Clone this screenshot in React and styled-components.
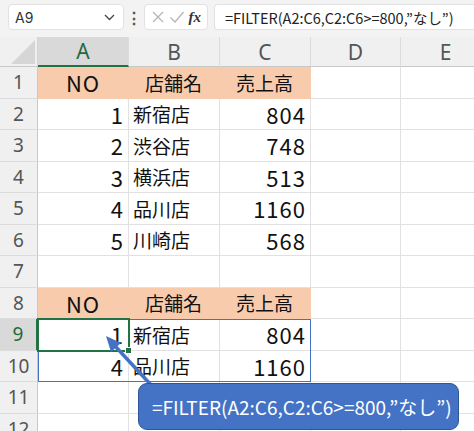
import React from 'react'
import styled, { createGlobalStyle } from 'styled-components'

const GlobalStyle = createGlobalStyle`
  html, body {
    margin: 0;
    padding: 0;
    background: #ffffff;
    overflow: hidden;
  }
  body {
    font-family: "Noto Sans CJK JP", "Noto Sans", sans-serif;
  }
`

const COLS = ['A', 'B', 'C', 'D', 'E']
const COL_WIDTHS = '38px 91px 91px 91px 90px 90px 90px'
const ROW_H = 31.5

const rows = [
	{ n: 1, head: true, cells: ['NO', '店舗名', '売上高'] },
	{ n: 2, cells: ['1', '新宿店', '804'] },
	{ n: 3, cells: ['2', '渋谷店', '748'] },
	{ n: 4, cells: ['3', '横浜店', '513'] },
	{ n: 5, cells: ['4', '品川店', '1160'] },
	{ n: 6, cells: ['5', '川崎店', '568'] },
	{ n: 7, cells: ['', '', ''] },
	{ n: 8, head: true, cells: ['NO', '店舗名', '売上高'] },
	{ n: 9, cells: ['1', '新宿店', '804'] },
	{ n: 10, cells: ['4', '品川店', '1160'] },
	{ n: 11, cells: ['', '', ''] },
	{ n: 12, cells: ['', '', ''] }
]

const Page = styled.div`
	width: 474px;
	height: 431px;
	overflow: hidden;
	background: #fff;
`

const TopBar = styled.div`
	height: 37px;
	background: #f3f3f3;
	display: flex;
	align-items: flex-start;
	padding: 4px 0 0 8px;
	box-sizing: border-box;
`

const NameBox = styled.div`
	width: 116px;
	height: 26px;
	box-sizing: border-box;
	background: #fff;
	border: 1px solid #e2e2e2;
	border-radius: 4px;
	display: flex;
	align-items: center;
	justify-content: space-between;
	padding: 0 8px 0 6px;
	font-family: "Inter", "Noto Sans", sans-serif;
	font-size: 14px;
	color: #333;
`

const Dots = styled.div`
	width: 20px;
	height: 26px;
	display: flex;
	align-items: center;
	justify-content: center;
	color: #555;
	font-size: 16px;
	font-weight: bold;
`

const IconBox = styled.div`
	width: 64px;
	height: 26px;
	box-sizing: border-box;
	background: #fff;
	border: 1px solid #e2e2e2;
	border-radius: 4px;
	display: flex;
	align-items: center;
	justify-content: space-around;
	padding: 0 4px;
	margin-right: 6px;
`

const Fx = styled.span`
	font-family: "Liberation Serif", serif;
	font-style: italic;
	font-weight: bold;
	font-size: 15px;
	color: #333;
`

const FormulaBar = styled.div`
	flex: 1;
	height: 26px;
	box-sizing: border-box;
	background: #fff;
	border: 1px solid #e2e2e2;
	border-right: none;
	border-radius: 4px 0 0 4px;
	display: flex;
	align-items: center;
	padding-left: 10px;
	font-size: 14.5px;
	color: #222;
	white-space: nowrap;
`

const Sheet = styled.div`
	position: relative;
	display: grid;
	grid-template-columns: ${COL_WIDTHS};
	grid-template-rows: 30px repeat(12, ${ROW_H}px);
`

const Corner = styled.div`
	background: #f0f0f0;
	border-bottom: 1px solid #c8c8c8;
	border-right: 1px solid #d4d4d4;
	position: relative;
	overflow: hidden;
	&::after {
		content: '';
		position: absolute;
		right: 2px;
		bottom: 2px;
		border-style: solid;
		border-width: 0 0 24px 24px;
		border-color: transparent transparent #d6d6d6 transparent;
	}
`

const ColHead = styled.div`
	background: ${p => (p.active ? '#d9d9d9' : '#f0f0f0')};
	border-right: 1px solid #dcdcdc;
	border-bottom: ${p => (p.active ? '2px solid #217346' : '1px solid #c8c8c8')};
	color: ${p => (p.active ? '#1e6b41' : '#555')};
	font-family: "Noto Sans", sans-serif;
	font-size: 21px;
	display: flex;
	align-items: center;
	justify-content: center;
	box-sizing: border-box;
`

const RowHead = styled.div`
	background: ${p => (p.active ? '#d9d9d9' : '#f0f0f0')};
	border-bottom: 1px solid #dcdcdc;
	border-right: ${p => (p.active ? '2px solid #217346' : '1px solid #c8c8c8')};
	color: ${p => (p.active ? '#1e6b41' : '#555')};
	font-family: "Noto Sans", sans-serif;
	font-size: 19px;
	display: flex;
	align-items: center;
	justify-content: center;
	box-sizing: border-box;
`

const Cell = styled.div`
	background: ${p => (p.head ? '#f8cbad' : '#fff')};
	border-right: 1px solid ${p => (p.head ? '#f8cbad' : '#e1e1e1')};
	border-bottom: 1px solid ${p => (p.head ? '#f8cbad' : '#e1e1e1')};
	box-sizing: border-box;
	display: flex;
	align-items: center;
	justify-content: ${p => p.align};
	padding: 0 ${p => (p.jp ? 5 : 4)}px 0 4px;
	font-size: ${p => (p.jp ? '19px' : '22px')};
	letter-spacing: ${p => (p.jp ? 0 : 1)}px;
	color: #111;
	white-space: nowrap;
`

const SelectBox = styled.div`
	position: absolute;
	left: 37px;
	top: ${30 + ROW_H * 8 - 1}px;
	width: 93px;
	height: ${ROW_H + 2}px;
	border: 2px solid #217346;
	box-sizing: border-box;
	pointer-events: none;
	&::after {
		content: '';
		position: absolute;
		right: -4px;
		bottom: -4px;
		width: 5px;
		height: 5px;
		background: #217346;
		border: 1px solid #fff;
	}
`

const RangeBox = styled.div`
	position: absolute;
	left: 38px;
	top: ${30 + ROW_H * 8}px;
	width: 273px;
	height: ${ROW_H * 2}px;
	border: 1px solid #4472c4;
	box-sizing: border-box;
	pointer-events: none;
`

const Callout = styled.div`
	position: absolute;
	left: 138px;
	top: 346px;
	width: 321px;
	height: 47px;
	box-sizing: border-box;
	background: #4472c4;
	border: 1.5px solid #2f5597;
	border-radius: 9px;
	color: #fff;
	font-size: 19px;
	display: flex;
	align-items: center;
	padding-left: 13px;
	white-space: nowrap;
`

const Arrow = styled.svg`
	position: absolute;
	left: 0;
	top: 0;
	pointer-events: none;
	overflow: visible;
`

const alignFor = (row, i) => {
	if (row.head) return 'center'
	if (i === 1) return 'flex-start'
	return 'flex-end'
}

const isJp = v => /[^\x00-\x7f]/.test(v)

export default function App() {
	const formula = '=FILTER(A2:C6,C2:C6>=800,”なし”)'
	return (
		<Page>
			<GlobalStyle />
			<TopBar>
				<NameBox>
					<span>A9</span>
					<svg width="11" height="7" viewBox="0 0 11 7">
						<path d="M1 1l4.5 4.5L10 1" fill="none" stroke="#444" strokeWidth="1.3" />
					</svg>
				</NameBox>
				<Dots>⋮</Dots>
				<IconBox>
					<svg width="14" height="14" viewBox="0 0 14 14">
						<path d="M2 2l10 10M12 2L2 12" stroke="#b5b5b5" strokeWidth="1.3" />
					</svg>
					<svg width="16" height="14" viewBox="0 0 16 14">
						<path d="M1.5 7.5l4.5 4.5L14.5 2" fill="none" stroke="#b5b5b5" strokeWidth="1.3" />
					</svg>
					<Fx>fx</Fx>
				</IconBox>
				<FormulaBar>{formula}</FormulaBar>
			</TopBar>
			<Sheet>
				<Corner />
				{COLS.map(c => (
					<ColHead key={c} active={c === 'A'}>{c}</ColHead>
				))}
				<ColHead />
				{rows.map(row => (
					<React.Fragment key={row.n}>
						<RowHead active={row.n === 9}>{row.n}</RowHead>
						{row.cells.map((v, i) => (
							<Cell key={i} head={row.head} jp={isJp(v)} align={alignFor(row, i)}>{v}</Cell>
						))}
						<Cell align="flex-start" />
						<Cell align="flex-start" />
						<Cell align="flex-start" />
					</React.Fragment>
				))}
				<RangeBox />
				<SelectBox />
				<Arrow width="474" height="431">
					<line x1="152" y1="349" x2="115" y2="309" stroke="#4472c4" strokeWidth="3.5" />
					<polygon points="106,299 121,306 111,315" fill="#4472c4" />
				</Arrow>
				<Callout>{formula}</Callout>
			</Sheet>
		</Page>
	)
}
